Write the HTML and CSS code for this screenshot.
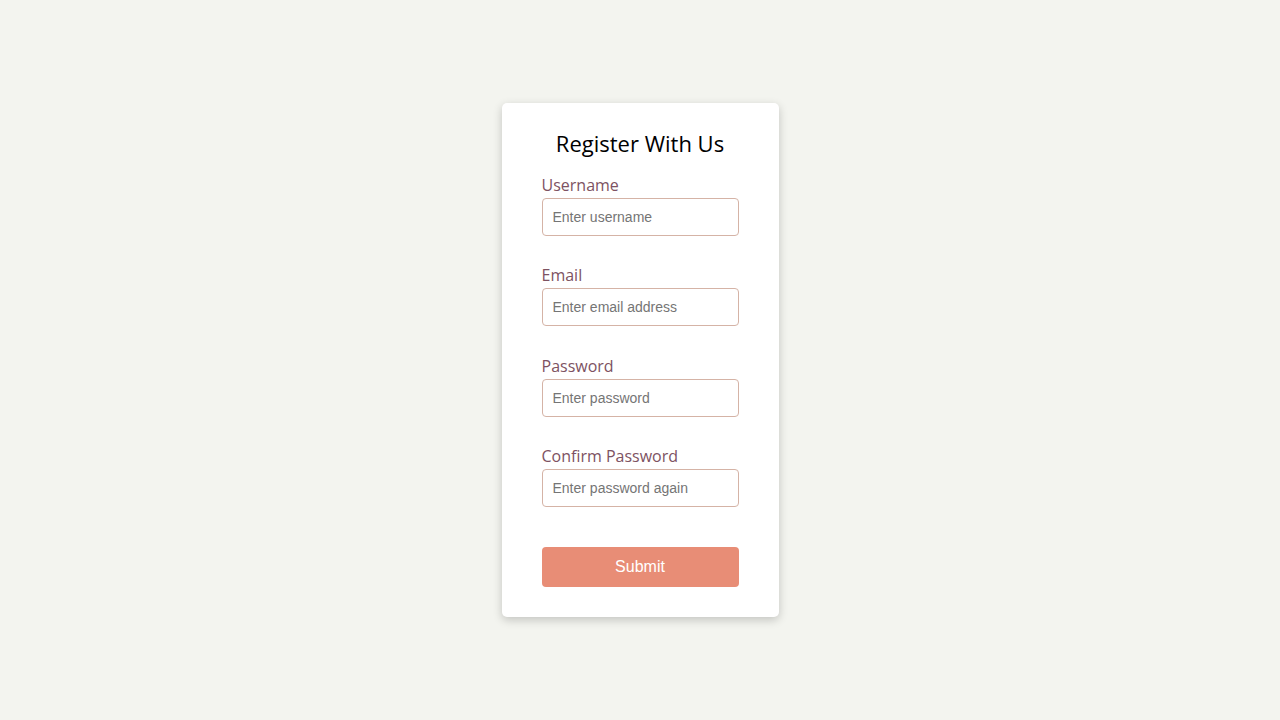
FILE: index.html
```html
<!DOCTYPE html>
<html lang="en">
<head>
<meta charset="UTF-8">
<title>Register With Us</title>
<link rel="stylesheet" href="styles.css">
</head>
<body>
<div class="container">
  <form class="form">
    <h2 class="title">Register With Us</h2>
    <div class="form-control">
      <label for="username">Username</label>
      <input type="text" id="username" placeholder="Enter username">
    </div>
    <div class="form-control">
      <label for="email">Email</label>
      <input type="text" id="email" placeholder="Enter email address">
    </div>
    <div class="form-control">
      <label for="password">Password</label>
      <input type="password" id="password" placeholder="Enter password">
    </div>
    <div class="form-control">
      <label for="password2">Confirm Password</label>
      <input type="password" id="password2" placeholder="Enter password again">
    </div>
    <button type="submit" class="submit">Submit</button>
  </form>
</div>
</body>
</html>
```

FILE: styles.css
```css
* { box-sizing: border-box; }
html, body { margin: 0; padding: 0; }
body {
  background: #f3f4ef;
  font-family: "Open Sans", "Lato", sans-serif;
  height: 720px;
  display: flex;
  justify-content: center;
  align-items: flex-start;
}
.container {
  margin-top: 103px;
  width: 277px;
  background: #fff;
  border-radius: 5px;
  box-shadow: 0 3px 10px rgba(0, 0, 0, 0.2);
}
.form {
  padding: 28px 40px 30px;
  display: flex;
  flex-direction: column;
}
.title {
  margin: 0 0 21px;
  font-size: 22px;
  line-height: 24px;
  font-weight: 500;
  text-align: center;
  color: #000;
}
.form-control {
  display: flex;
  flex-direction: column;
  padding-bottom: 30.33px;
}
.form-control label {
  color: #7d5262;
  font-size: 16px;
  line-height: 18px;
  margin-bottom: 4px;
}
.form-control input {
  height: 38px;
  border: 1px solid #d5b3a6;
  border-radius: 4px;
  padding: 0 10px;
  font-family: "Liberation Sans", Arial, sans-serif;
  font-size: 14px;
  color: #333;
  outline: none;
}
.form-control input::placeholder { color: #757575; }
.submit {
  margin-top: 10px;
  height: 40px;
  border: none;
  border-radius: 4px;
  background: #e88d76;
  color: #fff;
  font-family: "Liberation Sans", Arial, sans-serif;
  font-size: 16px;
  cursor: pointer;
}
```
